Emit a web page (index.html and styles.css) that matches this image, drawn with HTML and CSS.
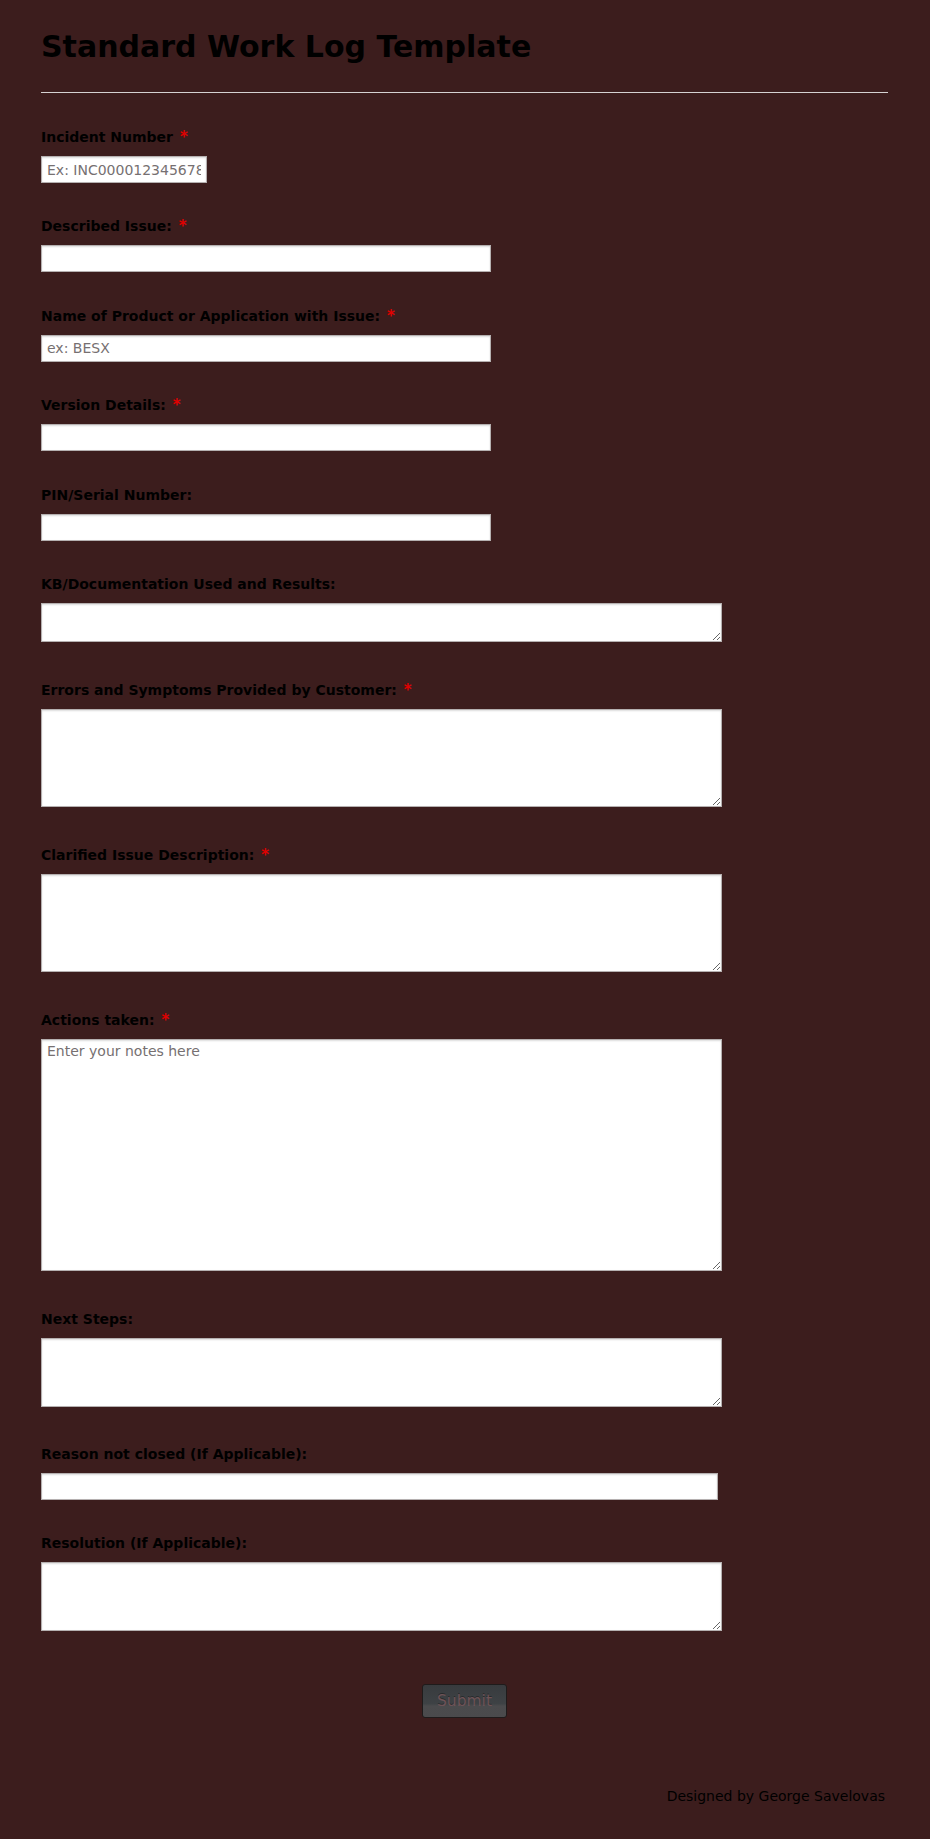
FILE: index.html
```html
<!DOCTYPE html>
<html lang="en">
<head>
<meta charset="utf-8">
<title>Standard Work Log Template</title>
<link rel="stylesheet" href="styles.css">
</head>
<body>
<div class="page">
  <h1 class="title">Standard Work Log Template</h1>
  <div class="rule"></div>
  <form class="log-form">
    <div class="field">
      <label class="label">Incident Number <span class="req">*</span></label>
      <input class="input input-sm" type="text" placeholder="Ex: INC000012345678">
    </div>
    <div class="field">
      <label class="label">Described Issue: <span class="req">*</span></label>
      <input class="input input-md" type="text">
    </div>
    <div class="field">
      <label class="label">Name of Product or Application with Issue: <span class="req">*</span></label>
      <input class="input input-md" type="text" placeholder="ex: BESX">
    </div>
    <div class="field">
      <label class="label">Version Details: <span class="req">*</span></label>
      <input class="input input-md" type="text">
    </div>
    <div class="field">
      <label class="label">PIN/Serial Number:</label>
      <input class="input input-md" type="text">
    </div>
    <div class="field field-ta">
      <label class="label">KB/Documentation Used and Results:</label>
      <textarea class="area area-xs"></textarea>
    </div>
    <div class="field field-ta">
      <label class="label">Errors and Symptoms Provided by Customer: <span class="req">*</span></label>
      <textarea class="area area-md"></textarea>
    </div>
    <div class="field field-ta">
      <label class="label">Clarified Issue Description: <span class="req">*</span></label>
      <textarea class="area area-md"></textarea>
    </div>
    <div class="field field-ta">
      <label class="label">Actions taken: <span class="req">*</span></label>
      <textarea class="area area-lg" placeholder="Enter your notes here"></textarea>
    </div>
    <div class="field field-ta">
      <label class="label">Next Steps:</label>
      <textarea class="area area-sm"></textarea>
    </div>
    <div class="field">
      <label class="label">Reason not closed (If Applicable):</label>
      <input class="input input-lg" type="text">
    </div>
    <div class="field field-ta">
      <label class="label">Resolution (If Applicable):</label>
      <textarea class="area area-sm"></textarea>
    </div>
    <div class="actions">
      <button class="submit" type="button">Submit</button>
    </div>
  </form>
  <footer class="footer">Designed by George Savelovas</footer>
</div>
</body>
</html>
```

FILE: styles.css
```css
html, body {
  margin: 0;
  padding: 0;
  background: #3c1d1d;
}

body {
  font-family: "DejaVu Sans", Verdana, sans-serif;
  color: #000;
}

.page {
  padding: 29px 42px 30px 41px;
}

.title {
  margin: 0;
  font-size: 30px;
  line-height: 36px;
  font-weight: bold;
  color: #000;
}

.rule {
  height: 1px;
  background: #d6d2d2;
  margin-top: 26.5px;
}

.log-form {
  margin: 36.5px 0 0;
}

.field {
  margin-bottom: 35.4px;
}

.field-ta {
  margin-bottom: 39.4px;
}

.label {
  display: block;
  font-size: 14px;
  line-height: 17px;
  font-weight: bold;
  margin-bottom: 10px;
  color: #000;
}

.req {
  color: #e00000;
  font-size: 15px;
  margin-left: 2px;
}

.input,
.area {
  display: block;
  box-sizing: border-box;
  margin: 0;
  border: 1px solid #b5b0b0;
  box-shadow: inset 0 1px 2px rgba(0, 0, 0, 0.14);
  background: #fff;
  font-family: "DejaVu Sans", Verdana, sans-serif;
  font-size: 14px;
  color: #222;
  padding: 2px 5px;
  outline: none;
}

.input {
  height: 27px;
}

.input::placeholder,
.area::placeholder {
  color: #767071;
}

.input-sm { width: 166px; }
.input-md { width: 450px; }
.input-lg { width: 677px; }

.area {
  width: 681px;
  padding-top: 3px;
  resize: both;
}

.area-xs { height: 39.5px; }
.area-md { height: 98.5px; }
.area-lg { height: 232.5px; }
.area-sm { height: 69px; }

.actions {
  display: flex;
  justify-content: center;
  margin-top: 53px;
}

.submit {
  width: 85px;
  height: 34px;
  box-sizing: border-box;
  border: 1px solid #1f1b1b;
  border-radius: 3px;
  background: linear-gradient(#383b3e 0%, #3e4245 58%, #4b4b4d 66%, #4a4a4c 100%);
  color: #6e5357;
  font-family: "DejaVu Sans", Verdana, sans-serif;
  font-size: 15.5px;
  text-shadow: 0 -1px 0 rgba(0, 0, 0, 0.35);
  padding: 0;
  cursor: pointer;
}

.footer {
  margin-top: 70px;
  text-align: right;
  font-size: 14px;
  line-height: 17px;
  padding-right: 3px;
  color: #000;
}
```
